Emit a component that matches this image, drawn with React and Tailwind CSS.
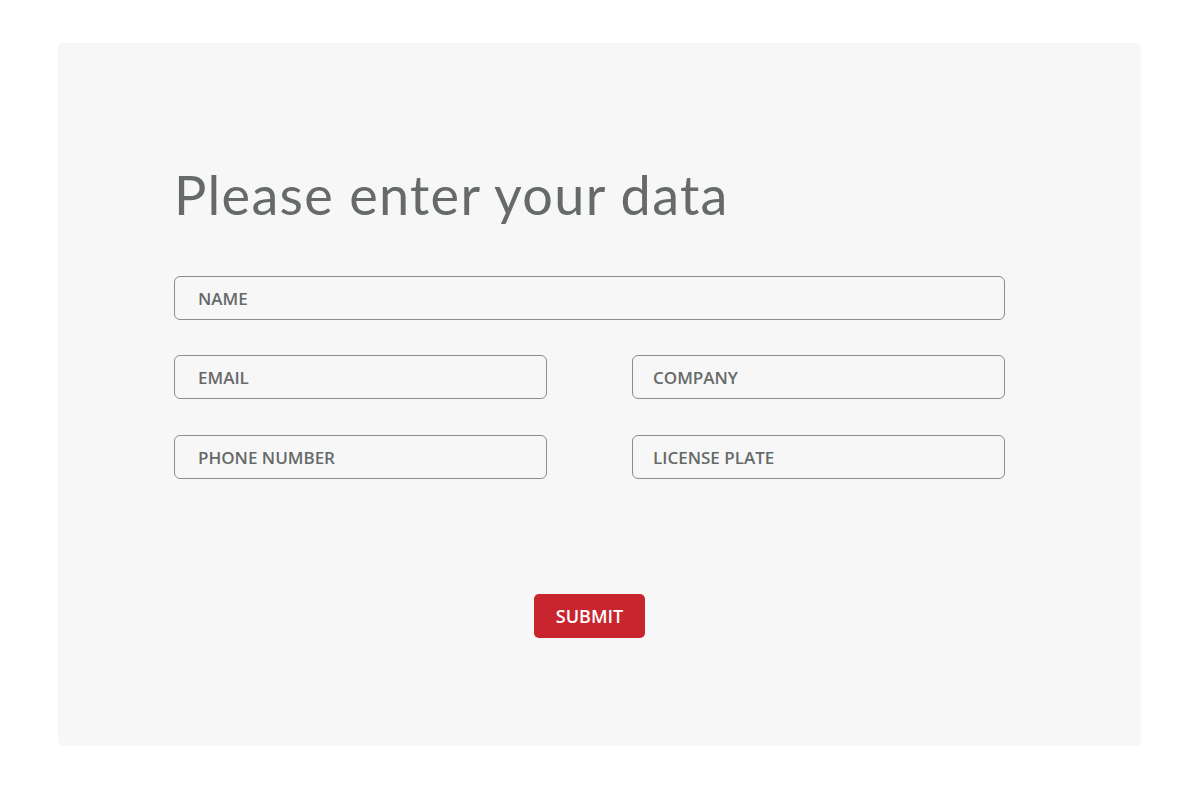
export default function App() {
  const field =
    "h-[44px] w-full rounded-[6px] border-[1.5px] border-[#8c8c8c] bg-transparent text-[17px] font-semibold uppercase text-[#666a6a] outline-none placeholder:text-[#666a6a]";
  const left = `${field} pl-[23px]`;
  const right = `${field} pl-[20px]`;
  return (
    <div className="min-h-[789px] w-[1200px] bg-white pt-[43px] pl-[58px]" style={{ fontFamily: '"Open Sans", sans-serif' }}>
      <div className="flex h-[703px] w-[1083px] flex-col rounded-[5px] bg-[#f7f7f7] pl-[116px] pt-[120px]">
        <div className="w-[831px]">
          <h1
            className="text-[54px] leading-[64px] font-normal tracking-[1.3px] text-[#666a6a]"
            style={{ fontFamily: 'Lato, sans-serif' }}
          >
            Please enter your data
          </h1>
          <form className="mt-[49px] flex flex-col">
            <input className={left} placeholder="NAME" />
            <div className="mt-[35px] grid grid-cols-2 gap-[85px]">
              <input className={left} placeholder="EMAIL" />
              <input className={right} placeholder="COMPANY" />
            </div>
            <div className="mt-[36px] grid grid-cols-2 gap-[85px]">
              <input className={left} placeholder="PHONE NUMBER" />
              <input className={right} placeholder="LICENSE PLATE" />
            </div>
            <div className="mt-[115px] flex justify-center">
              <button
                type="button"
                className="h-[44px] w-[111px] rounded-[5px] bg-[#c8252f] text-[18px] font-semibold text-white"
              >
                SUBMIT
              </button>
            </div>
          </form>
        </div>
      </div>
    </div>
  );
}
